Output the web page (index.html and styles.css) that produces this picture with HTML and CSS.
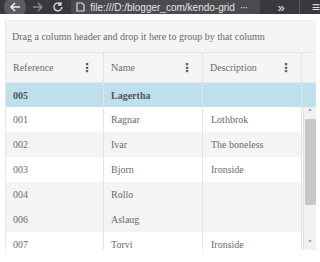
FILE: index.html
```html
<!doctype html>
<html lang="en">
  <head>
    <meta charset="UTF-8" />
    <title>Kendo grid</title>
    <link rel="stylesheet" href="styles.css">
  </head>

  <body>
    <!-- Browser toolbar -->
    <div class="toolbar">
      <span class="nav-btn back">
        <svg width="12" height="10" viewBox="0 0 12 10"><path d="M11 5H2M6 1L2 5l4 4" fill="none" stroke="#eee" stroke-width="1.6"/></svg>
      </span>
      <svg class="nav-icon" width="12" height="10" viewBox="0 0 12 10"><path d="M1 5h9M6 1l4 4-4 4" fill="none" stroke="#8a8a8e" stroke-width="1.6"/></svg>
      <svg class="nav-icon" width="12" height="12" viewBox="0 0 12 12"><path d="M10 6a4 4 0 1 1-1.5-3.2M9 1v3H6" fill="none" stroke="#ddd" stroke-width="1.4"/></svg>
      <div class="urlbar">
        <svg width="9" height="10" viewBox="0 0 9 10"><path d="M1 1h5l2 2v6H1z" fill="none" stroke="#ddd" stroke-width="1.2"/></svg>
        <span class="url">file:///D:/blogger_com/kendo-grid</span>
        <span class="dots">···</span>
      </div>
      <span class="more">»</span>
      <span class="sep"></span>
      <span class="menu">≡</span>
    </div>

    <!-- Grid -->
    <div class="grid">
      <div class="group-panel">Drag a column header and drop it here to group by that column</div>

      <div class="grid-header">
        <div class="th">Reference<span class="kebab">⋮</span></div>
        <div class="th">Name<span class="kebab">⋮</span></div>
        <div class="th">Description<span class="kebab">⋮</span></div>
        <div class="th-gap"></div>
      </div>

      <div class="grid-body">
        <div class="rows">
          <div class="row selected"><div class="td">005</div><div class="td">Lagertha</div><div class="td"></div></div>
          <div class="row"><div class="td">001</div><div class="td">Ragnar</div><div class="td">Lothbrok</div></div>
          <div class="row alt"><div class="td">002</div><div class="td">Ivar</div><div class="td">The boneless</div></div>
          <div class="row"><div class="td">003</div><div class="td">Bjorn</div><div class="td">Ironside</div></div>
          <div class="row alt"><div class="td">004</div><div class="td">Rollo</div><div class="td"></div></div>
          <div class="row alt"><div class="td">006</div><div class="td">Aslaug</div><div class="td"></div></div>
          <div class="row"><div class="td">007</div><div class="td">Torvi</div><div class="td">Ironside</div></div>
        </div>
        <div class="scroll-col">
          <div class="scroll-top"></div>
          <div class="scrollbar">
            <span class="arrow">˄</span>
            <div class="thumb"></div>
            <div class="track"></div>
            <span class="arrow">˅</span>
          </div>
        </div>
      </div>
    </div>
  </body>
</html>
```

FILE: styles.css
```css
body {
  margin: 0;
  font-family: "Liberation Serif", "Times New Roman", serif;
  background-color: #ffffff;
  width: 320px;
  height: 262px;
  overflow: hidden;
}

.toolbar {
  display: flex;
  align-items: center;
  height: 14px;
  background-color: #38383d;
  overflow: hidden;
  font-family: "Liberation Sans", Arial, sans-serif;
  color: #e6e6e6;
}

.nav-btn {
  display: flex;
  align-items: center;
  justify-content: center;
  width: 22px;
  height: 22px;
  margin: 0 6px 0 4px;
  border-radius: 50%;
  background-color: #5c5c61;
}

.nav-icon {
  margin-right: 8px;
}

.urlbar {
  display: flex;
  align-items: center;
  gap: 5px;
  width: 186px;
  height: 14px;
  padding-left: 5px;
  background-color: #4a4a4f;
  border-radius: 3px;
  font-size: 10px;
}

.url {
  white-space: nowrap;
}

.dots {
  font-size: 10px;
  letter-spacing: -1px;
}

.more {
  margin-left: 18px;
  font-size: 13px;
}

.sep {
  width: 1px;
  height: 14px;
  background-color: #5a5a5e;
  margin-left: 14px;
}

.menu {
  margin-left: 12px;
  font-size: 14px;
}

.grid {
  margin: 6px 5px 0 5px;
  width: 310px;
  border-left: 1px solid #e6e6e6;
  border-top: 1px solid #eeeeee;
  color: #6a6a6a;
  font-size: 10px;
}

.group-panel {
  height: 31px;
  line-height: 32px;
  padding-left: 6px;
  background-color: #f5f5f5;
  border-bottom: 1px solid #e6e6e6;
}

.grid-header {
  display: grid;
  grid-template-columns: 98px 99px 99px 14px;
  height: 29px;
  background-color: #f5f5f5;
  border-bottom: 1px solid #e6e6e6;
}

.th {
  display: flex;
  align-items: center;
  justify-content: space-between;
  padding: 0 9px 0 7px;
  border-right: 1px solid #e3e3e3;
}

.th:first-child {
  padding-right: 10px;
}

.kebab {
  font-family: "DejaVu Sans", sans-serif;
  font-size: 12px;
  font-weight: bold;
  color: #555555;
}

.grid-body {
  display: flex;
  height: 167px;
  overflow: hidden;
}

.rows {
  width: 297px;
}

.row {
  display: grid;
  grid-template-columns: 98px 99px 99px;
  height: 25px;
  background-color: #ffffff;
}

.row.alt {
  background-color: #f4f4f4;
}

.row.selected {
  height: 24px;
  background-color: #bde0ec;
  font-weight: bold;
  color: #555555;
}

.td {
  display: flex;
  align-items: center;
  padding-left: 7px;
  border-right: 1px solid #e3e3e3;
}

.td:last-child {
  padding-left: 8px;
}

.scroll-col {
  width: 13px;
  display: flex;
  flex-direction: column;
}

.scroll-top {
  height: 24px;
  background-color: #bde0ec;
}

.scrollbar {
  flex: 1;
  display: flex;
  flex-direction: column;
  align-items: center;
  background-color: #f1f1f1;
  border-left: 1px solid #e3e3e3;
}

.arrow {
  height: 12px;
  line-height: 12px;
  font-family: "DejaVu Sans", sans-serif;
  font-size: 9px;
  color: #555555;
}

.thumb {
  width: 11px;
  height: 86px;
  background-color: #c8c8c8;
}

.track {
  flex: 1;
}
```
